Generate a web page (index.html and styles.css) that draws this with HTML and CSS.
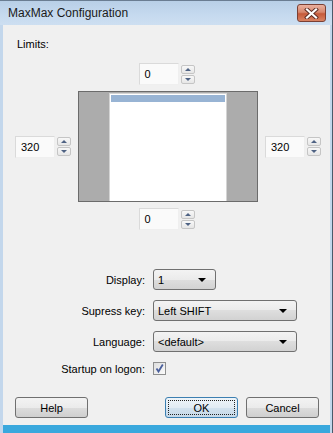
FILE: index.html
```html
<!DOCTYPE html>
<html lang="en">
<head>
    <meta charset="UTF-8">
    <title>MaxMax Configuration</title>
    <link rel="stylesheet" href="styles.css">
</head>
<body>
    <div class="window">
        <div class="titlebar">
            <span class="title">MaxMax Configuration</span>
            <span class="close-btn">
                <svg width="15" height="11" viewBox="0 0 15 11">
                    <path d="M3 1.5 L12 9.5 M12 1.5 L3 9.5" stroke="#5a2a22" stroke-width="4" stroke-linecap="square"/>
                    <path d="M3 1.5 L12 9.5 M12 1.5 L3 9.5" stroke="#ffffff" stroke-width="2.2" stroke-linecap="square"/>
                </svg>
            </span>
        </div>

        <div class="client">
            <div class="section-label">Limits:</div>

            <div class="limits">
                <div class="spin">
                    <div class="spin-field">0</div>
                    <div class="spin-btns">
                        <span class="spin-btn up"></span>
                        <span class="spin-btn down"></span>
                    </div>
                </div>

                <div class="limits-middle">
                    <div class="spin">
                        <div class="spin-field">320</div>
                        <div class="spin-btns">
                            <span class="spin-btn up"></span>
                            <span class="spin-btn down"></span>
                        </div>
                    </div>

                    <div class="monitor">
                        <div class="screen">
                            <div class="screen-bar"></div>
                        </div>
                    </div>

                    <div class="spin">
                        <div class="spin-field">320</div>
                        <div class="spin-btns">
                            <span class="spin-btn up"></span>
                            <span class="spin-btn down"></span>
                        </div>
                    </div>
                </div>

                <div class="spin">
                    <div class="spin-field">0</div>
                    <div class="spin-btns">
                        <span class="spin-btn up"></span>
                        <span class="spin-btn down"></span>
                    </div>
                </div>
            </div>

            <div class="form">
                <label class="form-label">Display:</label>
                <div class="combo combo-small">1</div>

                <label class="form-label">Supress key:</label>
                <div class="combo">Left SHIFT</div>

                <label class="form-label">Language:</label>
                <div class="combo">&lt;default&gt;</div>

                <label class="form-label">Startup on logon:</label>
                <div class="checkbox">
                    <svg width="11" height="11" viewBox="0 0 11 11">
                        <path d="M2.5 5.5 L4.5 8.5 L8.8 1.5" fill="none" stroke="#4a5f9c" stroke-width="1.8"/>
                    </svg>
                </div>
            </div>

            <div class="buttons">
                <button class="btn">Help</button>
                <button class="btn btn-default push-right"><span class="focus">OK</span></button>
                <button class="btn">Cancel</button>
            </div>
        </div>
    </div>
</body>
</html>
```

FILE: styles.css
```css
/* Reset */
* {
    margin: 0;
    padding: 0;
    box-sizing: border-box;
}

body {
    width: 333px;
    height: 433px;
    overflow: hidden;
    font-family: "Liberation Sans", Arial, sans-serif;
    font-size: 11px;
    color: #000;
    background: #fff;
}

/* Window frame */
.window {
    width: 333px;
    height: 433px;
    display: flex;
    flex-direction: column;
    background: #c3d7ec;
    border-top: 1px solid #6a7d92;
    border-right: 1px solid #4b5a6a;
}

.titlebar {
    height: 24px;
    display: flex;
    align-items: center;
    padding-left: 8px;
    padding-right: 6px;
    background: linear-gradient(#b8cfe7, #c6daef 60%, #cddff1);
}

.title {
    font-size: 12px;
    color: #1a1a1a;
}

.close-btn {
    margin-left: auto;
    width: 29px;
    height: 18px;
    display: flex;
    align-items: center;
    justify-content: center;
    border: 1px solid #7a4034;
    border-radius: 3px;
    background: linear-gradient(#eab09f, #d7876d 45%, #c65a3a 55%, #d98363);
}

.client {
    flex: 1;
    display: flex;
    flex-direction: column;
    margin: 0 2px 0 3px;
    background: #f0f0f0;
    border-bottom: 8px solid #3aa8dd;
}

.section-label {
    margin: 12px 0 0 14px;
    line-height: 14px;
}

/* Limits preview */
.limits {
    margin-top: 12px;
    display: flex;
    flex-direction: column;
    align-items: center;
    gap: 6px;
}

.limits-middle {
    align-self: stretch;
    display: flex;
    align-items: center;
    gap: 7px;
    padding-left: 12px;
}

.spin {
    display: flex;
    gap: 2px;
}

.spin-field {
    width: 40px;
    height: 22px;
    padding-left: 5px;
    line-height: 20px;
    background: #fafafa;
    border: 1px solid #dadada;
    border-right-color: #efefef;
    border-bottom-color: #efefef;
}

.spin-btns {
    display: flex;
    flex-direction: column;
    justify-content: center;
    gap: 1px;
    padding: 1px 0;
}

.spin-btn {
    width: 14px;
    height: 9px;
    display: flex;
    align-items: center;
    justify-content: center;
    border: 1px solid #c5c5c5;
    border-radius: 2px;
    background: linear-gradient(#f8f8f8, #e6e6e6);
}

.spin-btn::before {
    content: "";
    border-left: 3px solid transparent;
    border-right: 3px solid transparent;
}

.spin-btn.up::before {
    border-bottom: 3px solid #4e6283;
}

.spin-btn.down::before {
    border-top: 3px solid #4e6283;
}

.monitor {
    width: 180px;
    height: 111px;
    display: flex;
    justify-content: center;
    padding-top: 1px;
    background: #acacac;
    border: 1px solid #6b6b6b;
}

.screen {
    width: 118px;
    height: 108px;
    padding: 1px;
    background: #fff;
    border: 1px solid #d4d4d4;
    border-bottom: none;
}

.screen-bar {
    height: 7px;
    background: #98b4d4;
}

/* Settings form */
.form {
    margin-top: 39px;
    display: grid;
    grid-template-columns: 142px auto;
    column-gap: 8px;
    row-gap: 10px;
    align-items: center;
}

.form-label {
    justify-self: end;
}

.combo {
    width: 144px;
    height: 21px;
    display: flex;
    align-items: center;
    padding-left: 4px;
    border: 1px solid #707070;
    border-radius: 3px;
    background: linear-gradient(#f3f3f3, #ebebeb 50%, #dedede 50%, #d2d2d2);
    position: relative;
}

.combo::after {
    content: "";
    position: absolute;
    right: 9px;
    top: 8px;
    border-left: 4px solid transparent;
    border-right: 4px solid transparent;
    border-top: 4px solid #000;
}

.combo-small {
    width: 63px;
}

.checkbox {
    width: 13px;
    height: 13px;
    display: flex;
    align-items: center;
    justify-content: center;
    border: 1px solid #8e8f8f;
    background: linear-gradient(135deg, #dedede, #fbfbfb);
}

/* Dialog buttons */
.buttons {
    margin-top: 22px;
    display: flex;
    gap: 8px;
    padding: 0 11px 0 12px;
}

.btn {
    width: 73px;
    height: 21px;
    font-family: "Liberation Sans", Arial, sans-serif;
    font-size: 11px;
    color: #000;
    border: 1px solid #707070;
    border-radius: 3px;
    background: linear-gradient(#f3f3f3, #ebebeb 50%, #dddddd 50%, #cfcfcf);
}

.push-right {
    margin-left: auto;
}

.btn-default {
    padding: 2px;
    border-color: #3c7fb1;
    background: linear-gradient(#eef4f9, #e2ecf4 50%, #d3e2ee 50%, #c6d8e8);
}

.focus {
    display: flex;
    align-items: center;
    justify-content: center;
    height: 100%;
    border: 1px dotted #222;
}
```
